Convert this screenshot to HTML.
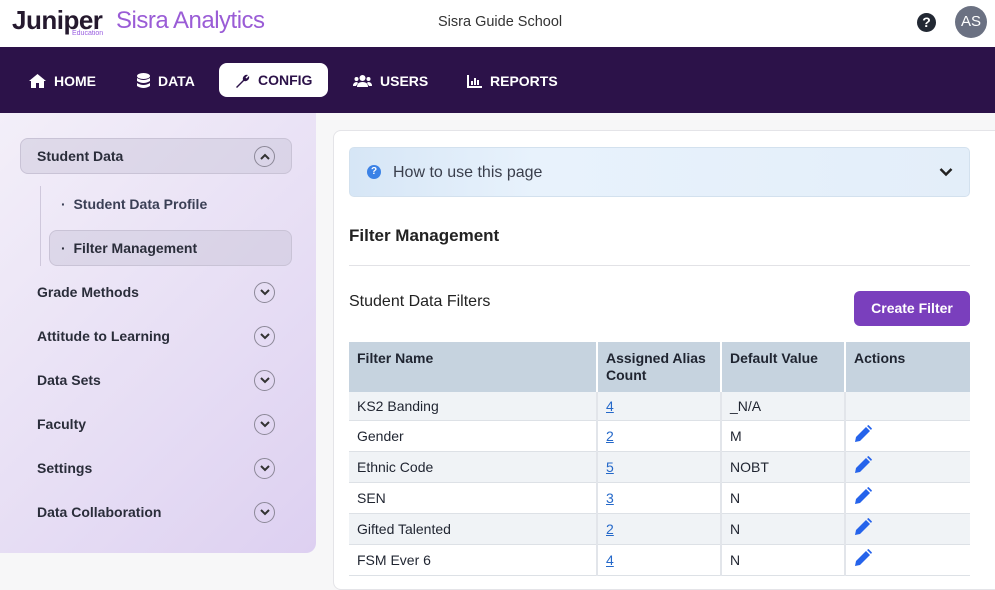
<!DOCTYPE html>
<html><head><meta charset="utf-8"><style>
*{box-sizing:border-box;margin:0;padding:0}
body{width:995px;height:571px;overflow:hidden;background:#f7f7f8;font-family:"Liberation Sans",sans-serif;position:relative;color:#1f2430}
.top{position:absolute;left:0;top:0;width:995px;height:47px;background:#fff}
.nav{position:absolute;left:0;top:47px;width:995px;height:66px;background:#2c1249}
.ni{position:absolute;top:16px;height:34px;line-height:34px;color:#fff;font-weight:bold;font-size:14px;display:flex;align-items:center;gap:8px}
.side{position:absolute;left:0;top:113px;width:316px;height:440px;background:linear-gradient(135deg,#f3eff9,#e6ddf4 60%,#ddd0f1);border-bottom-right-radius:10px}
.sb{position:absolute;font-size:14px;font-weight:bold;color:#2a2d3a}
.box{position:absolute;background:rgba(200,195,215,.45);border:1px solid #c9c3d6;border-radius:8px}
.chev{position:absolute;left:254px;width:21px;height:21px;border:1.5px solid #8c8898;border-radius:50%;display:flex;align-items:center;justify-content:center}
.card{position:absolute;left:333px;top:130px;width:680px;height:460px;background:#fff;border:1px solid #e4e4e8;border-radius:8px}
table{position:absolute;left:349px;top:342px;border-collapse:collapse;font-size:14px}
th{background:#c6d3df;text-align:left;vertical-align:top;padding:8px 8px;font-weight:bold;height:49px;line-height:17px;border-right:2px solid #fff}
td{padding:0 8px;border-right:2px solid #e2e5ea;border-bottom:1px solid #dde1e6}
tr:nth-child(even) td{background:#f0f3f6}
a{color:#2468c9;text-decoration:underline}
</style></head><body>
<div class="top">
 <div style="position:absolute;left:12px;top:5px;font-size:26px;font-weight:bold;color:#25192e;letter-spacing:-0.5px">Juniper</div>
 <div style="position:absolute;left:72px;top:30px;font-size:7px;color:#9a5fe0">Education</div>
 <div style="position:absolute;left:116px;top:7px;font-size:24px;color:#9a5cd6;letter-spacing:-0.5px">Sisra Analytics</div>
 <div style="position:absolute;left:438px;top:14px;font-size:14.5px;color:#333">Sisra Guide School</div>
 <div style="position:absolute;left:917px;top:13px;width:19px;height:19px;border-radius:50%;background:#222833;color:#fff;font-size:14px;font-weight:bold;text-align:center;line-height:19px">?</div>
 <div style="position:absolute;left:955px;top:6px;width:32px;height:32px;border-radius:50%;background:#6b7182;color:#fff;font-size:15px;text-align:center;line-height:32px">AS</div>
</div>
<div class="nav">
 <div class="ni" style="left:29px;top:17px"><svg width="17" height="14" viewBox="0 0 17 14"><path d="M8.5 0L0 7h2v7h5V9h3v5h5V7h2z" fill="#fff"/></svg>HOME</div>
 <div class="ni" style="left:137px;top:17px"><svg width="13" height="16" viewBox="0 0 13 16"><ellipse cx="6.5" cy="3" rx="6.5" ry="3" fill="#fff"/><path d="M0 5q6.5 4 13 0v3q-6.5 4-13 0zM0 10q6.5 4 13 0v3q-6.5 4-13 0z" fill="#fff"/></svg>DATA</div>
 <div class="ni" style="left:219px;width:109px;background:#fff;border-radius:8px;color:#2c1249;padding-left:16px"><svg width="15" height="15" viewBox="0 0 15 15"><path d="M1 14L8 7a4 4 0 0 1 5-5l-2.5 2.5 1 1L14 3a4 4 0 0 1-5 5L2 15z" fill="#2c1249"/></svg>CONFIG</div>
 <div class="ni" style="left:353px;top:17px"><svg width="19" height="14" viewBox="0 0 19 14"><circle cx="9.5" cy="4" r="3" fill="#fff"/><circle cx="3.5" cy="5" r="2" fill="#fff"/><circle cx="15.5" cy="5" r="2" fill="#fff"/><path d="M4 13q0-5 5.5-5t5.5 5zM0 12q0-4 4-4l1 1-2 3zM19 12q0-4-4-4l-1 1 2 3z" fill="#fff"/></svg>USERS</div>
 <div class="ni" style="left:467px;top:17px"><svg width="15" height="13" viewBox="0 0 15 13"><path d="M0 0h2v11h13v2H0zM4 6h2v4H4zM7 3h2v7H7zM10 5h2v5h-2z" fill="#fff"/></svg>REPORTS</div>
</div>
<div class="side">
 <div class="box" style="left:20px;top:25px;width:272px;height:36px"></div>
 <div class="sb" style="left:37px;top:35px">Student Data</div>
 <div class="chev" style="top:33px"><svg width="10" height="7"><path d="M1 6L5 2L9 6" stroke="#333" stroke-width="2" fill="none"/></svg></div>
 <div style="position:absolute;left:40px;top:73px;width:1px;height:80px;background:#cfc8dc"></div>
 <div class="sb" style="left:61px;top:83px;color:#3a3f55">· &nbsp;Student Data Profile</div>
 <div class="box" style="left:49px;top:117px;width:243px;height:36px"></div>
 <div class="sb" style="left:61px;top:127px">· &nbsp;Filter Management</div>
 <div class="sb" style="left:37px;top:171px">Grade Methods</div><div class="chev" style="top:169px"><svg width="10" height="7"><path d="M1 1L5 5L9 1" stroke="#333" stroke-width="2" fill="none"/></svg></div>
 <div class="sb" style="left:37px;top:215px">Attitude to Learning</div><div class="chev" style="top:213px"><svg width="10" height="7"><path d="M1 1L5 5L9 1" stroke="#333" stroke-width="2" fill="none"/></svg></div>
 <div class="sb" style="left:37px;top:259px">Data Sets</div><div class="chev" style="top:257px"><svg width="10" height="7"><path d="M1 1L5 5L9 1" stroke="#333" stroke-width="2" fill="none"/></svg></div>
 <div class="sb" style="left:37px;top:303px">Faculty</div><div class="chev" style="top:301px"><svg width="10" height="7"><path d="M1 1L5 5L9 1" stroke="#333" stroke-width="2" fill="none"/></svg></div>
 <div class="sb" style="left:37px;top:347px">Settings</div><div class="chev" style="top:345px"><svg width="10" height="7"><path d="M1 1L5 5L9 1" stroke="#333" stroke-width="2" fill="none"/></svg></div>
 <div class="sb" style="left:37px;top:391px">Data Collaboration</div><div class="chev" style="top:389px"><svg width="10" height="7"><path d="M1 1L5 5L9 1" stroke="#333" stroke-width="2" fill="none"/></svg></div>
</div>
<div class="card"></div>
<div style="position:absolute;left:349px;top:147px;width:621px;height:50px;background:linear-gradient(90deg,#d6e6f6,#e8f2fc 30%,#e3eef9);border:1px solid #d3e1ee;border-radius:5px">
 <div style="position:absolute;left:17px;top:17px;width:14px;height:14px;border-radius:50%;background:#3b82e6;color:#fff;font-size:10px;font-weight:bold;text-align:center;line-height:14px">?</div>
 <div style="position:absolute;left:43px;top:16px;font-size:16px;color:#3a3f4c">How to use this page</div>
 <svg style="position:absolute;left:589px;top:19px" width="14" height="10"><path d="M1.5 2L7 7.5L12.5 2" stroke="#222" stroke-width="2.5" fill="none"/></svg>
</div>
<div style="position:absolute;left:349px;top:226px;font-size:17px;font-weight:bold;color:#222">Filter Management</div>
<div style="position:absolute;left:349px;top:265px;width:621px;height:1px;background:#e2e2e6"></div>
<div style="position:absolute;left:349px;top:293px;font-size:16px;color:#222">Student Data Filters</div>
<div style="position:absolute;left:854px;top:291px;width:116px;height:35px;background:#7a3fbd;border-radius:6px;color:#fff;font-weight:bold;font-size:14px;text-align:center;line-height:35px">Create Filter</div>
<table>
<tr><th style="width:248px">Filter Name</th><th style="width:124px">Assigned Alias<br>Count</th><th style="width:124px">Default Value</th><th style="width:125px;border-right:0">Actions</th></tr>
<tr style="height:28px"><td>KS2 Banding</td><td><a>4</a></td><td>_N/A</td><td style="border-right:0"></td></tr>
<tr style="height:31px"><td>Gender</td><td><a>2</a></td><td>M</td><td style="border-right:0">P</td></tr>
<tr style="height:31px"><td>Ethnic Code</td><td><a>5</a></td><td>NOBT</td><td style="border-right:0">P</td></tr>
<tr style="height:31px"><td>SEN</td><td><a>3</a></td><td>N</td><td style="border-right:0">P</td></tr>
<tr style="height:31px"><td>Gifted Talented</td><td><a>2</a></td><td>N</td><td style="border-right:0">P</td></tr>
<tr style="height:31px"><td>FSM Ever 6</td><td><a>4</a></td><td>N</td><td style="border-right:0">P</td></tr>
</table>
<script>
document.querySelectorAll('td').forEach(function(t){if(t.textContent==='P'){t.innerHTML='<svg width="18" height="18" viewBox="0 0 18 18"><path d="M1 17l1-5L12 2l4 4L6 16z M13 1l1.5-1 3.5 3.5-1 1.5z" fill="#2563eb"/></svg>';}});
</script>
</body></html>
